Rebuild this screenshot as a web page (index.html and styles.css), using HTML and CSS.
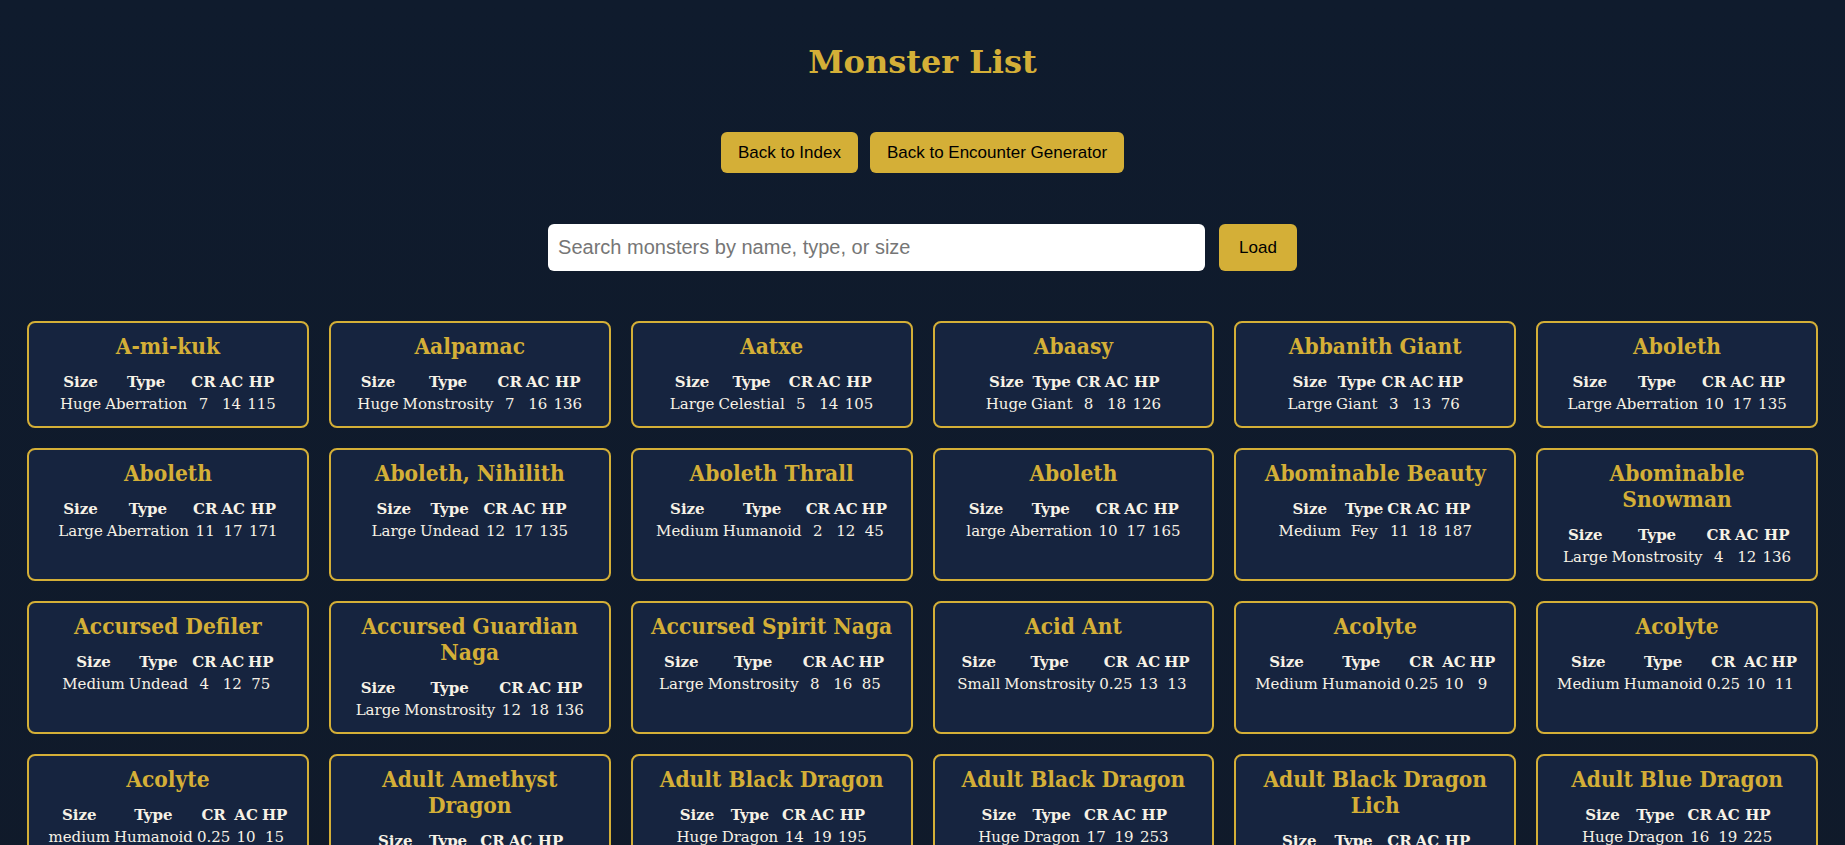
FILE: index.html
```html
<!DOCTYPE html>
<html lang="en">
<head>
<meta charset="utf-8">
<title>Monster List</title>
<link rel="stylesheet" href="styles.css">
</head>
<body>
<h1 class="page-title">Monster List</h1>
<nav class="nav">
  <button class="btn">Back to Index</button>
  <button class="btn">Back to Encounter Generator</button>
</nav>
<div class="search">
  <input class="search-input" type="text" placeholder="Search monsters by name, type, or size">
  <button class="btn btn-load">Load</button>
</div>
<main class="grid">
  <div class="card"><h3 class="name">A-mi-kuk</h3><table class="stats"><tr><th>Size</th><th>Type</th><th>CR</th><th>AC</th><th>HP</th></tr><tr><td>Huge</td><td>Aberration</td><td>7</td><td>14</td><td>115</td></tr></table></div>
  <div class="card"><h3 class="name">Aalpamac</h3><table class="stats"><tr><th>Size</th><th>Type</th><th>CR</th><th>AC</th><th>HP</th></tr><tr><td>Huge</td><td>Monstrosity</td><td>7</td><td>16</td><td>136</td></tr></table></div>
  <div class="card"><h3 class="name">Aatxe</h3><table class="stats"><tr><th>Size</th><th>Type</th><th>CR</th><th>AC</th><th>HP</th></tr><tr><td>Large</td><td>Celestial</td><td>5</td><td>14</td><td>105</td></tr></table></div>
  <div class="card"><h3 class="name">Abaasy</h3><table class="stats"><tr><th>Size</th><th>Type</th><th>CR</th><th>AC</th><th>HP</th></tr><tr><td>Huge</td><td>Giant</td><td>8</td><td>18</td><td>126</td></tr></table></div>
  <div class="card"><h3 class="name">Abbanith Giant</h3><table class="stats"><tr><th>Size</th><th>Type</th><th>CR</th><th>AC</th><th>HP</th></tr><tr><td>Large</td><td>Giant</td><td>3</td><td>13</td><td>76</td></tr></table></div>
  <div class="card"><h3 class="name">Aboleth</h3><table class="stats"><tr><th>Size</th><th>Type</th><th>CR</th><th>AC</th><th>HP</th></tr><tr><td>Large</td><td>Aberration</td><td>10</td><td>17</td><td>135</td></tr></table></div>

  <div class="card"><h3 class="name">Aboleth</h3><table class="stats"><tr><th>Size</th><th>Type</th><th>CR</th><th>AC</th><th>HP</th></tr><tr><td>Large</td><td>Aberration</td><td>11</td><td>17</td><td>171</td></tr></table></div>
  <div class="card"><h3 class="name">Aboleth, Nihilith</h3><table class="stats"><tr><th>Size</th><th>Type</th><th>CR</th><th>AC</th><th>HP</th></tr><tr><td>Large</td><td>Undead</td><td>12</td><td>17</td><td>135</td></tr></table></div>
  <div class="card"><h3 class="name">Aboleth Thrall</h3><table class="stats"><tr><th>Size</th><th>Type</th><th>CR</th><th>AC</th><th>HP</th></tr><tr><td>Medium</td><td>Humanoid</td><td>2</td><td>12</td><td>45</td></tr></table></div>
  <div class="card"><h3 class="name">Aboleth</h3><table class="stats"><tr><th>Size</th><th>Type</th><th>CR</th><th>AC</th><th>HP</th></tr><tr><td>large</td><td>Aberration</td><td>10</td><td>17</td><td>165</td></tr></table></div>
  <div class="card"><h3 class="name">Abominable Beauty</h3><table class="stats"><tr><th>Size</th><th>Type</th><th>CR</th><th>AC</th><th>HP</th></tr><tr><td>Medium</td><td>Fey</td><td>11</td><td>18</td><td>187</td></tr></table></div>
  <div class="card"><h3 class="name">Abominable Snowman</h3><table class="stats"><tr><th>Size</th><th>Type</th><th>CR</th><th>AC</th><th>HP</th></tr><tr><td>Large</td><td>Monstrosity</td><td>4</td><td>12</td><td>136</td></tr></table></div>

  <div class="card"><h3 class="name">Accursed Defiler</h3><table class="stats"><tr><th>Size</th><th>Type</th><th>CR</th><th>AC</th><th>HP</th></tr><tr><td>Medium</td><td>Undead</td><td>4</td><td>12</td><td>75</td></tr></table></div>
  <div class="card"><h3 class="name">Accursed Guardian Naga</h3><table class="stats"><tr><th>Size</th><th>Type</th><th>CR</th><th>AC</th><th>HP</th></tr><tr><td>Large</td><td>Monstrosity</td><td>12</td><td>18</td><td>136</td></tr></table></div>
  <div class="card"><h3 class="name">Accursed Spirit Naga</h3><table class="stats"><tr><th>Size</th><th>Type</th><th>CR</th><th>AC</th><th>HP</th></tr><tr><td>Large</td><td>Monstrosity</td><td>8</td><td>16</td><td>85</td></tr></table></div>
  <div class="card"><h3 class="name">Acid Ant</h3><table class="stats"><tr><th>Size</th><th>Type</th><th>CR</th><th>AC</th><th>HP</th></tr><tr><td>Small</td><td>Monstrosity</td><td>0.25</td><td>13</td><td>13</td></tr></table></div>
  <div class="card"><h3 class="name">Acolyte</h3><table class="stats"><tr><th>Size</th><th>Type</th><th>CR</th><th>AC</th><th>HP</th></tr><tr><td>Medium</td><td>Humanoid</td><td>0.25</td><td>10</td><td>9</td></tr></table></div>
  <div class="card"><h3 class="name">Acolyte</h3><table class="stats"><tr><th>Size</th><th>Type</th><th>CR</th><th>AC</th><th>HP</th></tr><tr><td>Medium</td><td>Humanoid</td><td>0.25</td><td>10</td><td>11</td></tr></table></div>

  <div class="card"><h3 class="name">Acolyte</h3><table class="stats"><tr><th>Size</th><th>Type</th><th>CR</th><th>AC</th><th>HP</th></tr><tr><td>medium</td><td>Humanoid</td><td>0.25</td><td>10</td><td>15</td></tr></table></div>
  <div class="card"><h3 class="name">Adult Amethyst Dragon</h3><table class="stats"><tr><th>Size</th><th>Type</th><th>CR</th><th>AC</th><th>HP</th></tr><tr><td>Huge</td><td>Dragon</td><td>17</td><td>19</td><td>256</td></tr></table></div>
  <div class="card"><h3 class="name">Adult Black Dragon</h3><table class="stats"><tr><th>Size</th><th>Type</th><th>CR</th><th>AC</th><th>HP</th></tr><tr><td>Huge</td><td>Dragon</td><td>14</td><td>19</td><td>195</td></tr></table></div>
  <div class="card"><h3 class="name">Adult Black Dragon</h3><table class="stats"><tr><th>Size</th><th>Type</th><th>CR</th><th>AC</th><th>HP</th></tr><tr><td>Huge</td><td>Dragon</td><td>17</td><td>19</td><td>253</td></tr></table></div>
  <div class="card"><h3 class="name">Adult Black Dragon Lich</h3><table class="stats"><tr><th>Size</th><th>Type</th><th>CR</th><th>AC</th><th>HP</th></tr><tr><td>Huge</td><td>Undead</td><td>19</td><td>19</td><td>195</td></tr></table></div>
  <div class="card"><h3 class="name">Adult Blue Dragon</h3><table class="stats"><tr><th>Size</th><th>Type</th><th>CR</th><th>AC</th><th>HP</th></tr><tr><td>Huge</td><td>Dragon</td><td>16</td><td>19</td><td>225</td></tr></table></div>
</main>
</body>
</html>
```
FILE: styles.css
```css
html, body {
  margin: 0;
  padding: 0;
}

body {
  background: linear-gradient(180deg, #0f1b2d 0%, #101a2a 100%);
  background-color: #0f1b2d;
  min-height: 100vh;
  padding: 0 27px 40px;
  box-sizing: border-box;
  font-family: "DejaVu Serif", "Liberation Serif", serif;
  color: #f5efe0;
}

.page-title {
  margin: 0;
  padding-top: 44px;
  font-family: "DejaVu Serif", "Liberation Serif", serif;
  font-weight: bold;
  font-size: 32px;
  line-height: 36px;
  color: #d4af37;
  text-align: center;
}

.nav {
  display: flex;
  justify-content: center;
  gap: 12px;
  margin-top: 52px;
}

.btn {
  font-family: "Liberation Sans", Arial, sans-serif;
  font-size: 17px;
  line-height: 19px;
  padding: 11px 17px;
  background: #d4af37;
  color: #000;
  border: none;
  border-radius: 6px;
  cursor: pointer;
}

.search {
  display: flex;
  justify-content: center;
  align-items: stretch;
  gap: 14px;
  margin-top: 51px;
}

.search-input {
  width: 657px;
  box-sizing: border-box;
  font-family: "Liberation Sans", Arial, sans-serif;
  font-size: 20px;
  line-height: 23px;
  padding: 12px 10px;
  border: none;
  border-radius: 6px;
  background: #fff;
  color: #222;
}

.search-input::placeholder {
  color: #767676;
}

.btn-load {
  padding: 0 20px;
}

.grid {
  display: grid;
  grid-template-columns: repeat(6, 1fr);
  gap: 20px;
  margin-top: 50px;
}

.card {
  background: #16243f;
  border: 2px solid #d4af37;
  border-radius: 8px;
  padding: 10px 15px;
  text-align: center;
}

.name {
  margin: 0 0 11px;
  font-family: "DejaVu Serif Condensed", "DejaVu Serif", serif;
  font-stretch: condensed;
  font-weight: bold;
  font-size: 22.5px;
  line-height: 26px;
  color: #d4af37;
}

.stats {
  margin: 0 auto;
  border-spacing: 2px;
  font-family: "DejaVu Serif", "Liberation Serif", serif;
  font-size: 15px;
  line-height: 18px;
  color: #f7f2e6;
}

.stats th,
.stats td {
  padding: 1px;
  text-align: center;
}

.stats th {
  font-weight: bold;
}
```
